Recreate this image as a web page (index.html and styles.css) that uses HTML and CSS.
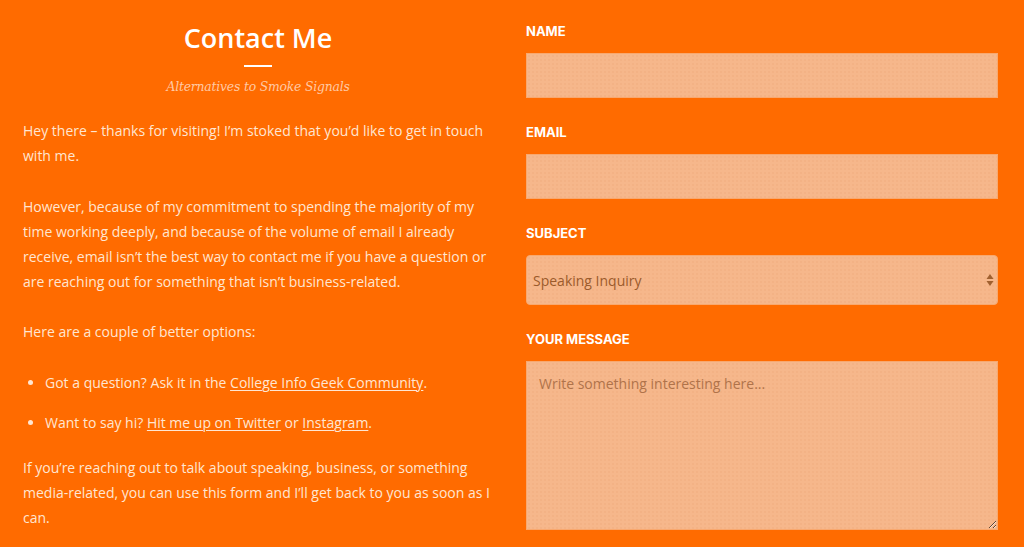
FILE: index.html
```html
<!DOCTYPE html>
<html lang="en">
<head>
<meta charset="utf-8">
<title>Contact Me</title>
<link rel="stylesheet" href="styles.css">
</head>
<body>
<main class="page">
  <section class="intro">
    <header class="intro-head">
      <h1 class="title">Contact Me</h1>
      <div class="title-bar"></div>
      <p class="subtitle">Alternatives to Smoke Signals</p>
    </header>
    <p class="copy">Hey there – thanks for visiting! I’m stoked that you’d like to get in touch with me.</p>
    <p class="copy">However, because of my commitment to spending the majority of my time working deeply, and because of the volume of email I already receive, email isn’t the best way to contact me if you have a question or are reaching out for something that isn’t business-related.</p>
    <p class="copy">Here are a couple of better options:</p>
    <ul class="options">
      <li>Got a question? Ask it in the <a href="#">College Info Geek Community</a>.</li>
      <li>Want to say hi? <a href="#">Hit me up on Twitter</a> or <a href="#">Instagram</a>.</li>
    </ul>
    <p class="copy last">If you’re reaching out to talk about speaking, business, or something media-related, you can use this form and I’ll get back to you as soon as I can.</p>
  </section>
  <form class="form">
    <div class="field">
      <label class="label" for="name">NAME</label>
      <input class="input" id="name" type="text">
    </div>
    <div class="field">
      <label class="label" for="email">EMAIL</label>
      <input class="input" id="email" type="email">
    </div>
    <div class="field">
      <label class="label" for="subject">SUBJECT</label>
      <div class="select-wrap">
        <select class="select" id="subject">
          <option>Speaking Inquiry</option>
          <option>Business Inquiry</option>
          <option>Media Inquiry</option>
        </select>
        <svg class="select-arrows" width="8" height="14" viewBox="0 0 8 14" aria-hidden="true">
          <path d="M4 1 L7.5 6 L0.5 6 Z" fill="#a0602f"/>
          <path d="M4 13 L7.5 8 L0.5 8 Z" fill="#a0602f"/>
        </svg>
      </div>
    </div>
    <div class="field">
      <label class="label" for="message">YOUR MESSAGE</label>
      <textarea class="textarea" id="message" placeholder="Write something interesting here..."></textarea>
    </div>
  </form>
</main>
</body>
</html>
```

FILE: styles.css
```css
html, body {
  margin: 0;
  padding: 0;
  background: #ff6b00;
}

body {
  font-family: "Open Sans", "Liberation Sans", sans-serif;
  color: #ffe6d2;
  width: 1024px;
  height: 547px;
  overflow: hidden;
}

.page {
  display: flex;
  align-items: flex-start;
  padding: 0 26px 0 23px;
  gap: 33px;
}

.intro {
  width: 470px;
  flex: none;
  padding-top: 20px;
}

.intro-head {
  display: flex;
  flex-direction: column;
  align-items: center;
  margin-bottom: 22px;
}

.title {
  margin: 0;
  font-family: "Open Sans", sans-serif;
  font-weight: 600;
  font-size: 27px;
  line-height: 36px;
  color: #ffffff;
}

.title-bar {
  width: 28px;
  height: 2px;
  background: #ffffff;
  margin-top: 9px;
}

.subtitle {
  margin: 11px 0 0;
  font-family: "DejaVu Serif", serif;
  font-style: italic;
  font-weight: 300;
  font-size: 12.4px;
  line-height: 18px;
  color: #ffc9a4;
  letter-spacing: -0.2px;
}

.copy {
  margin: 0 0 25.5px;
  font-size: 14px;
  line-height: 25px;
}

.copy.last {
  margin: 0;
}

.options {
  margin: 0 0 20px;
  padding-left: 22px;
  font-size: 14px;
  line-height: 25px;
}

.options li {
  margin-bottom: 15px;
}

.options li:last-child {
  margin-bottom: 0;
}

.options a {
  color: #ffe6d2;
  text-decoration: underline;
  text-underline-offset: 2px;
  text-decoration-thickness: 1px;
}

.form {
  flex: 1;
  padding-top: 23px;
  display: flex;
  flex-direction: column;
  gap: 26px;
}

.field {
  display: flex;
  flex-direction: column;
}

.label {
  font-family: "Inter", "Open Sans", sans-serif;
  font-weight: 700;
  font-size: 13px;
  line-height: 16px;
  color: #ffffff;
  margin-bottom: 14px;
  letter-spacing: 0;
}

.input,
.select,
.textarea {
  box-sizing: border-box;
  width: 100%;
  background-color: #f6b78b;
  background-image: radial-gradient(rgba(230, 150, 100, 0.3) 0.6px, transparent 0.8px);
  background-size: 4px 4px;
  border: 1px solid #f9a86e;
  color: #9b5b2c;
  font-family: "Open Sans", sans-serif;
  font-size: 14px;
  outline: none;
  margin: 0;
}

.input {
  height: 45px;
  border-radius: 0;
  padding: 0 10px;
}

.select-wrap {
  position: relative;
}

.select {
  height: 50px;
  border-radius: 4px;
  padding: 0 6px;
  appearance: none;
  -webkit-appearance: none;
}

.select-arrows {
  position: absolute;
  right: 4px;
  top: 18px;
}

.textarea {
  height: 169px;
  padding: 11px 12px;
  line-height: 22px;
  resize: vertical;
}

.textarea::placeholder {
  color: #b0734a;
  opacity: 1;
}
```
